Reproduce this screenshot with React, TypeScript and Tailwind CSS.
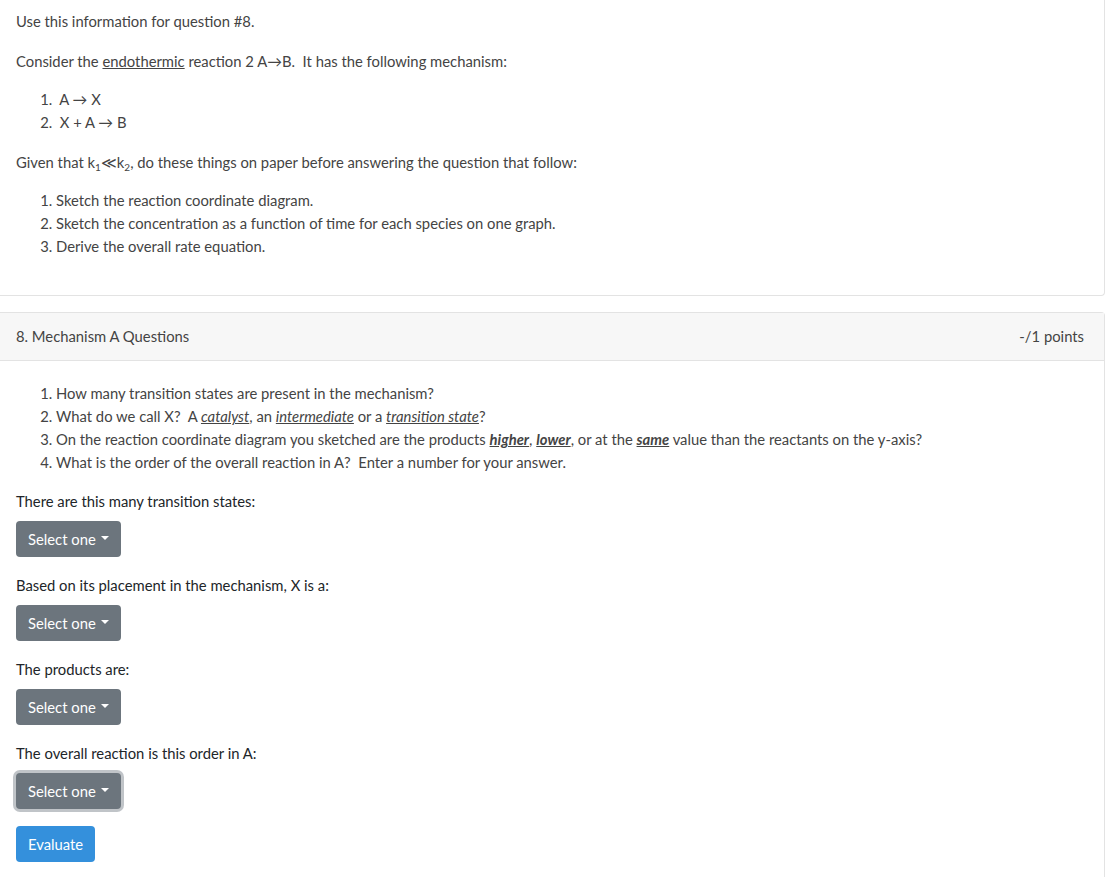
const font = { fontFamily: "Lato, 'Noto Sans', sans-serif" }

function SelectButton({ focused }: { focused?: boolean }) {
  return (
    <button
      className={
        "inline-flex items-center h-9 px-3 rounded-[4px] bg-[#6c757d] text-white text-[14.8px] leading-[23px] " +
        (focused ? "shadow-[0_0_0_3px_rgba(130,138,145,0.5)]" : "")
      }
    >
      Select one
      <span className="ml-[5px] mb-[2px] inline-block w-0 h-0 border-t-[4px] border-t-white border-x-[4px] border-x-transparent" />
    </button>
  )
}

function Question({ label, focused }: { label: string; focused?: boolean }) {
  return (
    <div className="mb-[17px]">
      <div className="text-[#212529] mb-2">{label}</div>
      <SelectButton focused={focused} />
    </div>
  )
}

export default function App() {
  return (
    <div className="bg-white min-h-[877px] pr-[5px] text-[14.8px] leading-[23px] text-[#444]" style={font}>
      <div className="border-r border-b border-[#e3e3e3] rounded-br-[4px] pl-4 pr-5 pt-[10px] pb-[21px]">
        <p className="mb-[17px]">Use this information for question #8.</p>
        <p className="mb-[15px]">
          Consider the <span className="underline">endothermic</span> reaction 2 A→B.&nbsp; It has the following
          mechanism:
        </p>
        <ol className="list-decimal pl-10 mb-[17px]">
          <li>&nbsp;A → X</li>
          <li>&nbsp;X + A → B</li>
        </ol>
        <p className="mb-[15px]">
          Given that k<sub className="text-[10px]">1</sub>≪k<sub className="text-[10px]">2</sub>, do these things on
          paper before answering the question that follow:
        </p>
        <ol className="list-decimal pl-10 mb-4">
          <li>Sketch the reaction coordinate diagram.</li>
          <li>Sketch the concentration as a function of time for each species on one graph.</li>
          <li>Derive the overall rate equation.</li>
        </ol>
      </div>

      <div className="mt-4 border-t border-r border-[#e3e3e3] rounded-tr-[4px]">
        <div className="flex justify-between items-center bg-[#f7f7f7] border-b border-[#e3e3e3] pl-4 pr-5 py-3">
          <span>8. Mechanism A Questions</span>
          <span>-/1 points</span>
        </div>
        <div className="pl-4 pr-5 pt-[21px] pb-6">
          <ol className="list-decimal pl-10 mb-4">
            <li>How many transition states are present in the mechanism?</li>
            <li>
              What do we call X?&nbsp; A <em className="underline italic">catalyst</em>, an{" "}
              <em className="underline italic">intermediate</em> or a{" "}
              <em className="underline italic">transition state</em>?
            </li>
            <li>
              On the reaction coordinate diagram you sketched are the products{" "}
              <em className="underline italic font-bold">higher</em>,{" "}
              <em className="underline italic font-bold">lower</em>, or at the{" "}
              <em className="underline italic font-bold">same</em> value than the reactants on the y-axis?
            </li>
            <li>What is the order of the overall reaction in A?&nbsp; Enter a number for your answer.</li>
          </ol>
          <Question label="There are this many transition states:" />
          <Question label="Based on its placement in the mechanism, X is a:" />
          <Question label="The products are:" />
          <Question label="The overall reaction is this order in A:" focused />
          <button className="inline-flex items-center h-9 px-3 rounded-[4px] bg-[#3490dc] text-white text-[14.8px] leading-[23px]">
            Evaluate
          </button>
        </div>
      </div>
    </div>
  )
}
